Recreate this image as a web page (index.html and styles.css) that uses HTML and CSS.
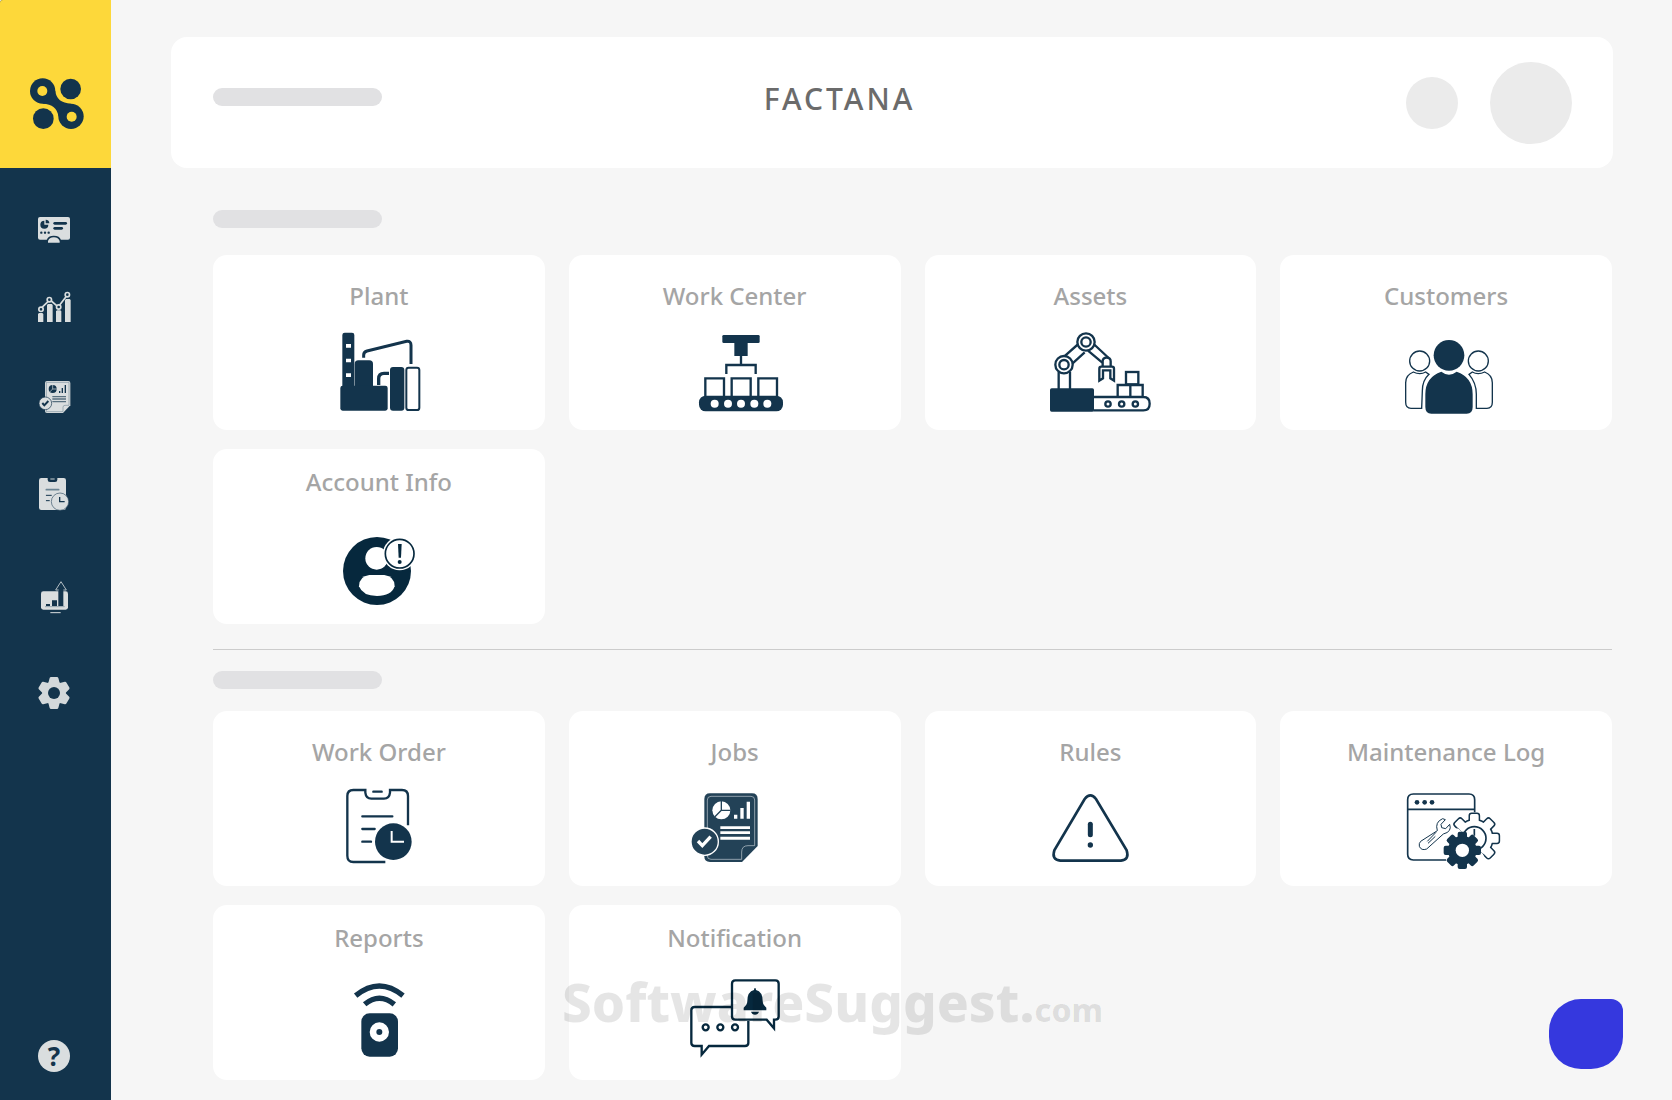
FILE: index.html
```html
<!DOCTYPE html>
<html lang="en">
<head>
<meta charset="utf-8">
<meta name="viewport" content="width=device-width, initial-scale=1">
<title>Factana</title>
<link rel="stylesheet" href="styles.css">
</head>
<body>
<div class="app">
  <aside class="sidebar">
    <a class="brand" href="#" aria-label="Factana home">
      <svg class="brand-logo" viewBox="87 231 168 159" aria-hidden="true">
        <g fill="#13344c">
          <circle cx="128" cy="273" r="38"/><circle cx="213" cy="349" r="38"/>
          <path d="M166 273Q170 309 213 311L175 349Q171 313 128 311Z"/>
          <circle cx="212" cy="267" r="31"/><circle cx="130" cy="356" r="31"/>
        </g>
        <circle cx="127" cy="273" r="15" fill="#fdd83a"/><circle cx="215" cy="350" r="15" fill="#fdd83a"/>
      </svg>
    </a>
    <nav class="nav" aria-label="Main">
      <a href="#" aria-label="Dashboard"><svg class="nav-icon" viewBox="0 -51 240 279">
        <rect x="54" y="51" width="96" height="68" rx="6" fill="#dadedf"/>
        <g fill="#13344c"><path d="M73 62v12h12a12 12 0 1 1-12-12z"/><path d="M77 59a11 11 0 0 1 11 11h-11z"/>
        <rect x="100" y="66" width="41" height="8" rx="4"/><rect x="100" y="81" width="29" height="8" rx="4"/>
        <circle cx="64" cy="98" r="3.5"/><circle cx="75" cy="98" r="3.5"/><circle cx="86" cy="98" r="3.5"/>
        <path d="M80 121a22 17 0 0 1 43 0z"/></g>
        <path d="M84 128v-5a18 15 0 0 1 35 0v5z" fill="#dadedf"/>
      </svg></a>
      <a href="#" aria-label="Analytics"><svg class="nav-icon" viewBox="0 228 240 279">
        <g fill="#dadedf"><path d="M54 366v-24l3-3h10l3 3v24zM81 366v-51l3-3h11l3 3v51zM108 366v-32l3-3h10l3 3v32zM135 366v-66l3-3h11l3 3v66z"/></g>
        <g fill="none" stroke="#dadedf" stroke-width="5"><path d="M66 322L84 305M94 303L110 317M119 315L138 290"/>
        <circle cx="63" cy="328" r="6.500"/><circle cx="88" cy="299" r="6.500"/><circle cx="116" cy="321" r="6.500"/><circle cx="142" cy="284" r="6.500"/></g>
      </svg></a>
      <a href="#" aria-label="Reports"><svg class="nav-icon" viewBox="0 507 240 279">
        <path d="M81 543h64q6 0 6 6v67l-22 23H81q-6 0-6-6v-84q0-6 6-6z" fill="#dadedf"/>
        <path d="M129 635v-13q0-6 6-6h12V547H79v88z" fill="none" stroke="#7c919d" stroke-width="2"/>
        <g fill="#13344c"><circle cx="98" cy="567" r="12"/><path d="M117 573h4v6h-4zM125 564h4v15h-4zM134 555h4v24h-4z"/><path d="M97 588h41v4H97zM97 595h41v4H97zM97 603h41v4H97z" opacity=".65"/></g>
        <path d="M98 555v12h12M98 567l-9 9" stroke="#dadedf" stroke-width="2" fill="none"/>
        <circle cx="76" cy="610" r="19" fill="#dadedf" stroke="#13344c" stroke-width="2"/>
        <path d="M67 609l6 7 12-13" fill="none" stroke="#13344c" stroke-width="6"/>
      </svg></a>
      <a href="#" aria-label="Work orders"><svg class="nav-icon" viewBox="0 6 240 279">
        <rect x="57" y="54" width="81" height="96" rx="7" fill="#dadedf"/>
        <path d="M83 53h29v6q0 7-7 7H90q-7 0-7-7z" fill="#13344c"/><path d="M91 57h13" stroke="#9caab2" stroke-width="4"/>
        <g stroke="#6c8594" stroke-width="5" stroke-linecap="round"><path d="M79 89h37"/><path d="M79 106h15M79 122h9" stroke="#13344c" stroke-width="3"/></g>
        <circle cx="120" cy="125" r="26" fill="#dadedf" stroke="#38546a" stroke-width="2"/>
        <path d="M119 111v14h15" fill="none" stroke="#13344c" stroke-width="4"/>
      </svg></a>
      <a href="#" aria-label="Performance"><svg class="nav-icon" viewBox="0 285 240 279">
        <rect x="63" y="394" width="81" height="55" rx="7" fill="#dadedf"/>
        <path d="M78 432h12v6H78zM96 421h15v17H96z" fill="#13344c"/><path d="M75 440h59" stroke="#6c8594" stroke-width="2"/>
        <path d="M115 438v-48h-9l17-26 16 26h-9v48z" fill="#13344c"/>
        <path d="M116 390h-9l16-25 16 25h-9" fill="none" stroke="#b4bec4" stroke-width="3"/>
        <path d="M91 458h31" stroke="#dadedf" stroke-width="3"/>
      </svg></a>
      <a href="#" aria-label="Settings"><svg class="nav-icon" viewBox="0 564 240 279">
        <g transform="translate(102 699)" fill="#d3d8da"><circle r="35"/>
          <path id="t6" d="M-17-30L-13-45Q-12-48-9-48H9Q12-48 13-45L17-30V30L13 45Q12 48 9 48H-9Q-12 48-13 45L-17 30Z"/>
          <use href="#t6" transform="rotate(60)"/><use href="#t6" transform="rotate(120)"/><circle r="18" fill="#13344c"/></g>
      </svg></a>
    </nav>
    <a class="help" href="#" aria-label="Help">?</a>
  </aside>

  <main class="main">
    <header class="topbar">
      <span class="pill"></span>
      <h1 class="title">FACTANA</h1>
      <div class="topbar-actions"><span class="dot dot-small"></span><span class="dot dot-large"></span></div>
    </header>

    <section class="group">
      <div class="pill"></div>
      <div class="cards">
        <a class="card" href="#"><h2 class="card-title">Plant</h2>
          <svg class="card-icon" viewBox="-3 0 420 330" fill="#13344c">
            <rect x="97" y="38" width="36" height="175" rx="7"/><rect x="134" y="121" width="55" height="90" rx="11"/>
            <rect x="91" y="197" width="142" height="75" rx="7"/><rect x="240" y="141" width="43" height="131" rx="9"/>
            <path d="M108 72h15v11h-15zM108 116h15v11h-15zM108 160h15v11h-15z" fill="#fff"/>
            <g fill="none" stroke="#13344c"><rect x="289" y="143" width="39" height="127" rx="7" stroke-width="6"/>
            <path d="M161 113v-8q0-9 10-12L290 64q13-2 13 12v56" stroke-width="9"/><path d="M206 195v-19q0-16 16-16h15" stroke-width="10"/></g>
          </svg></a>
        <a class="card" href="#"><h2 class="card-title">Work Center</h2>
          <svg class="card-icon" viewBox="-45 0 420 330" fill="#13344c">
            <rect x="127" y="45" width="112" height="24" rx="4"/><path d="M163 66h40v42h-40z"/>
            <g fill="none" stroke="#13344c" stroke-width="7"><path d="M183 107v27M139 162v-27h88v27"/>
            <path d="M76 230v-55h56v55M155 230v-55h57v55M235 230v-55h56v55"/></g>
            <rect x="57" y="227" width="252" height="47" rx="20"/>
            <g fill="#fff"><circle cx="104" cy="251" r="12"/><circle cx="144" cy="251" r="12"/><circle cx="183" cy="251" r="12"/><circle cx="223" cy="251" r="12"/><circle cx="262" cy="251" r="12"/></g>
          </svg></a>
        <a class="card" href="#"><h2 class="card-title">Assets</h2>
          <svg class="card-icon" viewBox="-30 0 420 330" fill="none" stroke="#13344c" stroke-width="7">
            <path d="M86 155v52M120 155v52M103 109L145 72M127 131L164 97M191 72L236 114M174 92L217 128"/>
            <g fill="#fff"><circle cx="102" cy="134" r="26"/><circle cx="102" cy="134" r="14"/><circle cx="168" cy="66" r="26"/><circle cx="168" cy="66" r="14"/></g>
            <path d="M218 137v-13q0-11 12-11t12 11v13M208 182v-36q0-6 6-6h32q6 0 6 6v36l-11-7v-24h-22v24z"/>
            <rect x="288" y="156" width="37" height="37"/><path d="M263 230v-35h75v35M301 195v35M190 231h150q19 0 19 20t-19 20H190"/>
            <rect x="60" y="205" width="132" height="70" rx="5" fill="#13344c" stroke="none"/>
            <g><circle cx="234" cy="252" r="8"/><circle cx="275" cy="252" r="8"/><circle cx="316" cy="252" r="8"/></g>
          </svg></a>
        <a class="card" href="#"><h2 class="card-title">Customers</h2>
          <svg class="card-icon" viewBox="-42 0 420 330" fill="#13344c">
            <circle cx="177" cy="106" r="46"/>
            <path d="M154 155q23 18 46 0q48 16 48 68v38q0 20-18 20H124q-18 0-18-20v-38q0-52 48-68z"/>
            <g fill="none" stroke="#13344c" stroke-width="4"><circle cx="89" cy="123" r="30"/><circle cx="265" cy="123" r="30"/>
            <path d="M95 265H63q-16 0-16-18v-59q0-23 23-32q20 10 37 0l10 7q-20 18-20 50z"/>
            <path d="M259 265h32q16 0 16-18v-59q0-23-23-32q-20 10-37 0l-10 7q22 25 22 60z"/></g>
          </svg></a>
        <a class="card card-compact" href="#"><h2 class="card-title">Account Info</h2>
          <svg class="card-icon" viewBox="-33 -18 420 330">
            <circle cx="171" cy="153" r="102" fill="#06283d"/><circle cx="170" cy="115" r="34" fill="#fff"/>
            <path d="M148 165h45q31 4 31 34q-10 29-53 29t-54-29q0-30 31-34z" fill="#fff"/>
            <circle cx="239" cy="101" r="50" fill="#fff"/><circle cx="239" cy="101" r="43" fill="#fff" stroke="#06283d" stroke-width="5"/>
            <path d="M234 72h11l-2 41h-7z" fill="#06283d"/><circle cx="239" cy="126" r="6" fill="#06283d"/>
          </svg></a>
      </div>
    </section>

    <hr class="rule">

    <section class="group group-second">
      <div class="pill"></div>
      <div class="cards">
        <a class="card" href="#"><h2 class="card-title">Work Order</h2>
          <svg class="card-icon" viewBox="-33 18 420 330" fill="none" stroke="#13344c" stroke-width="7">
            <path d="M264 166V78q0-18-18-18h-36v8q-2 18-18 18h-38q-16 0-18-18v-8h-36q-18 0-18 18v179q0 19 18 19h96"/>
            <path d="M160 65h25M127 139h90M127 177h37M127 215h26" stroke-linecap="round"/>
            <circle cx="220" cy="215" r="55" fill="#13344c" stroke="none"/><path d="M215 183v32h37" stroke="#fff" stroke-width="6"/>
          </svg></a>
        <a class="card" href="#"><h2 class="card-title">Jobs</h2>
          <svg class="card-icon" viewBox="1035 18 420 330" fill="#234257">
            <path d="M1170 70h126q17 0 17 17v141l-47 48h-96q-17 0-17-17V87q0-17 17-17z"/>
            <path d="M1265 268V246q0-19 19-19h20V90q0-11-11-11h-120q-11 0-11 11v167q0 11 11 11z" fill="none" stroke="#c5ced4" stroke-width="2"/>
            <g fill="#fff"><circle cx="1204" cy="121" r="27"/><path d="M1242 134h10v12h-10zM1261 114h10v32h-10zM1280 95h10v51h-10zM1201 169h89v8h-89zM1201 184h89v8h-89zM1201 200h89v9h-89z"/></g>
            <path d="M1204 93v28h28M1204 121l-20 20" fill="none" stroke="#234257" stroke-width="4"/>
            <circle cx="1154" cy="215" r="41" stroke="#fff" stroke-width="4"/>
            <path d="M1134 213l13 14 25-27" fill="none" stroke="#fff" stroke-width="10"/>
          </svg></a>
        <a class="card" href="#"><h2 class="card-title">Rules</h2>
          <svg class="card-icon" viewBox="-30 18 420 330" fill="none" stroke="#13344c">
            <path d="M164 87q17-22 34 0L290 241q9 28-17 31H91q-27-3-18-31z" stroke-width="8"/>
            <path d="M181 163v31" stroke-width="15" stroke-linecap="round"/><circle cx="181" cy="225" r="8" fill="#13344c" stroke="none"/>
          </svg></a>
        <a class="card" href="#"><h2 class="card-title">Maintenance Log</h2>
          <svg class="card-icon" viewBox="1038 18 420 330" fill="#13344c">
            <defs>
              <clipPath id="rear"><path d="M1255 90h180v195h-65l-10-32-52-52-22-26-24 2z"/></clipPath>
              <path id="cog-big" d="M-13-46V-68q0-5 5-5H8q5 0 5 5v22zM-13 46V68q0 5 5 5H8q5 0 5-5V46z"/>
              <path id="cog-small" d="M-14-35V-50q0-6 6-6H8q6 0 6 6v15zM-14 35V50q0 6 6 6H8q6 0 6-6V35z"/>
              <g id="cog-shape"><circle r="54"/><use href="#cog-big"/><use href="#cog-big" transform="rotate(45)"/><use href="#cog-big" transform="rotate(90)"/><use href="#cog-big" transform="rotate(135)"/></g>
            </defs>
            <g fill="none" stroke="#13344c" stroke-width="5"><path d="M1248 270h-98q-17 0-17-17V89q0-17 17-17h167q17 0 17 17v38M1133 118h200"/></g>
            <circle cx="1161" cy="97" r="7"/><circle cx="1184" cy="97" r="7"/><circle cx="1206" cy="97" r="7"/>
            <path d="M1222 182q-8-26 16-36l8 3-13 14 2 10 12 3 12-13q8 22-19 29l-50 45q-16 6-22-8-2-9 4-15zM1192 214l26-27M1194 220l22-21" fill="none" stroke="#13344c" stroke-width="3"/>
            <g clip-path="url(#rear)"><g transform="translate(1333 205)"><use href="#cog-shape" stroke="#13344c" stroke-width="9"/><use href="#cog-shape" fill="#fff"/>
            <path d="M0-28V-8" stroke="#13344c" stroke-width="5"/><circle r="35" fill="none" stroke="#13344c" stroke-width="5"/></g></g>
            <g transform="translate(1297 241)"><circle r="50" fill="#fff"/><circle r="43"/><use href="#cog-small"/><use href="#cog-small" transform="rotate(45)"/><use href="#cog-small" transform="rotate(90)"/><use href="#cog-small" transform="rotate(135)"/><circle r="20" fill="#fff"/></g>
          </svg></a>
        <a class="card card-compact" href="#"><h2 class="card-title">Reports</h2>
          <svg class="card-icon" viewBox="927 30 420 330" fill="#13344c">
            <rect x="1084" y="160" width="110" height="130" rx="25"/>
            <circle cx="1138" cy="216" r="19" fill="none" stroke="#fff" stroke-width="20"/>
            <g fill="none" stroke="#13344c" stroke-width="16"><path d="M1067 107q71-58 142 0M1094 133q44-37 89 0"/></g>
          </svg></a>
        <a class="card card-compact" href="#"><h2 class="card-title">Notification</h2>
          <svg class="card-icon" viewBox="375 210 420 330" fill="none" stroke="#06283d" stroke-width="7">
            <path d="M576 321H464q-10 0-10 10v98q0 9 10 9h21v26l22-26h108q10 0 10-9v-66"/>
            <path d="M586 241h120q10 0 10 10v98q0 10-10 10h-4v26l-22-26h-94q-10 0-10-10v-98q0-10 10-10z"/>
            <circle cx="497" cy="382" r="9"/><circle cx="541" cy="382" r="9"/><circle cx="585" cy="382" r="9"/>
            <path d="M645 264q3 0 3 6q20 5 20 33q0 11 11 20v8h-68v-8q11-9 11-20q0-28 20-33q0-6 3-6zM633 335h24q-3 9-12 9t-12-9z" fill="#06283d" stroke="none"/>
          </svg></a>
      </div>
    </section>
  </main>

  <div class="watermark">SoftwareSuggest.<span class="watermark-suffix">com</span></div>
  <button class="chat" type="button" aria-label="Open chat"></button>
</div>
</body>
</html>
```

FILE: styles.css
```css
* { box-sizing: border-box; }

body {
  margin: 0;
  background: #f6f6f6;
  font-family: "Noto Sans", "Open Sans", sans-serif;
}

a { color: inherit; text-decoration: none; }
svg { display: block; }

.app {
  position: relative;
  display: grid;
  grid-template-columns: 111px 1fr;
  min-height: 100vh;
}

.sidebar {
  display: flex;
  flex-direction: column;
  background: #13344c;
  border-top-left-radius: 3px;
  overflow: hidden;
}

.brand {
  height: 168px;
  padding: 77px 0 0 29px;
  background: #fdd83a;
}
.brand-logo { width: 56px; height: 53px; }

.nav { padding: 15px 0 0 20px; }
.nav-icon { width: 80px; height: 93px; }

.help {
  width: 32px;
  height: 32px;
  margin: auto 0 28px 38px;
  border-radius: 50%;
  background: #dadedf;
  color: #13344c;
  font-size: 26px;
  font-weight: 700;
  line-height: 32px;
  text-align: center;
}

.main { padding: 37px 59px 20px 60px; }

.topbar {
  display: grid;
  grid-template-columns: 169px 1fr 275px;
  align-items: center;
  height: 131px;
  padding: 0 41px 0 42px;
  border-radius: 16px;
  background: #fff;
}
.topbar .pill { margin-bottom: 12px; }

.pill {
  width: 169px;
  height: 18px;
  border-radius: 9px;
  background: #e1e1e3;
}

.title {
  margin: 0;
  padding-bottom: 8px;
  color: #6b6b6b;
  font-size: 30px;
  font-weight: 500;
  letter-spacing: 3px;
  line-height: 40px;
  text-align: center;
}

.topbar-actions {
  display: flex;
  align-items: center;
  justify-content: flex-end;
  gap: 32px;
}
.dot { border-radius: 50%; background: #ebebeb; }
.dot-small { width: 52px; height: 52px; }
.dot-large { width: 82px; height: 82px; }

.group { padding: 42px 1px 0 42px; }
.group-second { padding-top: 21px; }

.cards {
  display: grid;
  grid-template-columns: repeat(4, 1fr);
  gap: 19px 24px;
  margin-top: 27px;
}
.group-second .cards { margin-top: 22px; }

.card {
  height: 175px;
  border-radius: 14px;
  background: #fff;
}
.card-title {
  height: 65px;
  margin: 0;
  padding-top: 25px;
  color: #a5a5a5;
  font-size: 24px;
  font-weight: 500;
  line-height: 32px;
  text-align: center;
}
.card-compact .card-title { padding-top: 17px; }
.card-icon { width: 140px; height: 110px; margin: 0 auto; }

.rule {
  height: 1px;
  margin: 25px 1px 0 42px;
  border: 0;
  background: #cccccc;
}

.watermark {
  position: absolute;
  left: 562px;
  bottom: 54px;
  color: rgba(0, 0, 0, 0.1);
  font-size: 53px;
  font-weight: 800;
  line-height: 72px;
  pointer-events: none;
}
.watermark-suffix { font-size: 32px; }

.chat {
  position: fixed;
  right: 49px;
  bottom: 31px;
  width: 74px;
  height: 70px;
  border: 0;
  border-radius: 32px 12px 32px 32px;
  background: #3538de;
}
```
